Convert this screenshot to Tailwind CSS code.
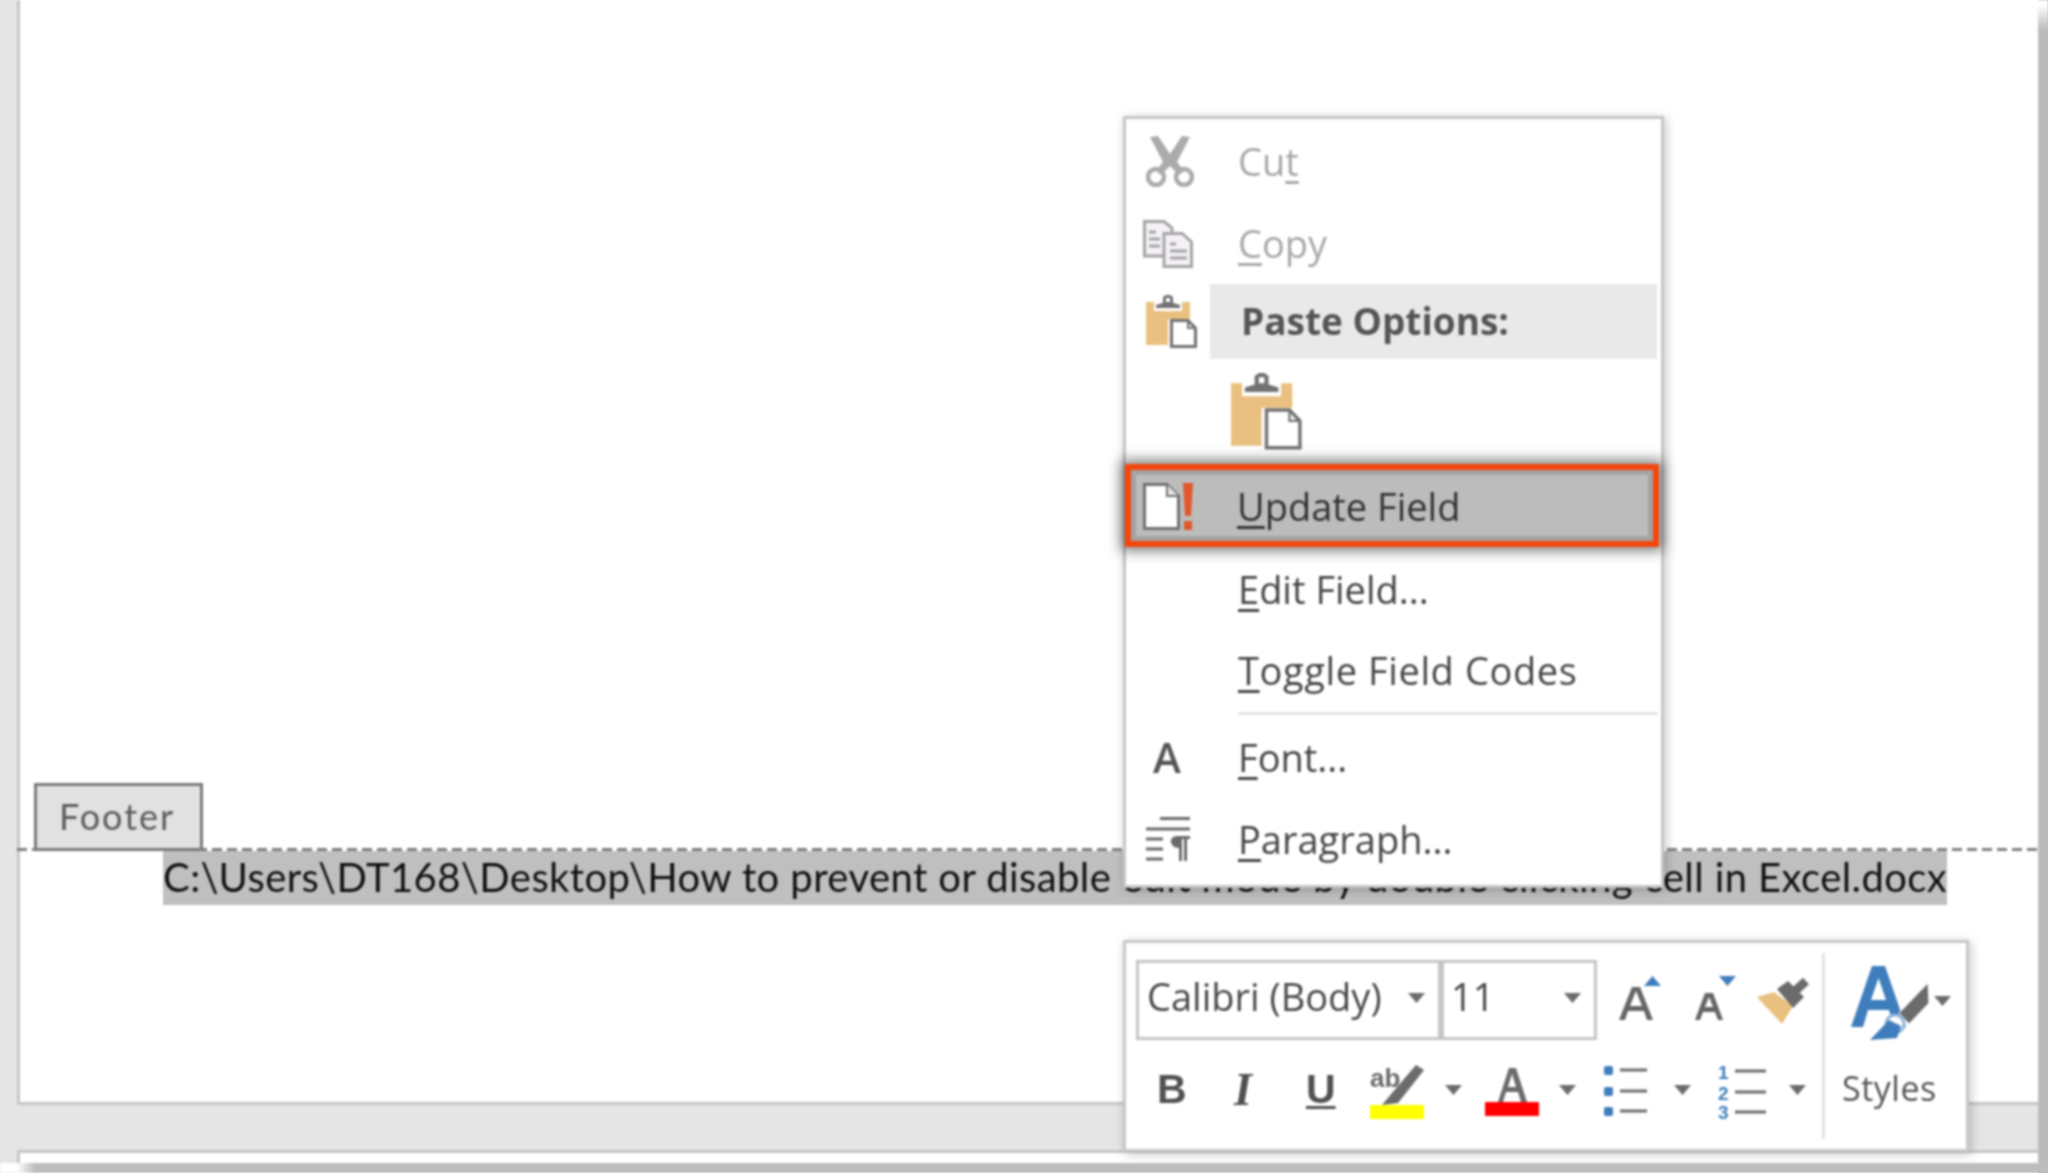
<!DOCTYPE html>
<html>
<head>
<meta charset="utf-8">
<script src="https://cdn.jsdelivr.net/npm/@tailwindcss/browser@4"></script>
</head>
<body class="overflow-hidden bg-[linear-gradient(to_right,#e5e5e5_17px,#fff_17px,#fff_2038px,#bbb_2038px)]">
<div class="relative w-[2048px] h-[1173px] overflow-hidden blur-[0.8px] font-['Open_Sans',sans-serif]">

  <!-- document area -->
  <div class="flex h-[1163px]">
    <div class="flex-1 flex flex-col bg-[#e5e5e5] pl-[17px]">
      <div class="h-[1105px] bg-white border-l-[3px] border-b-[3px] border-[#c6c6c6] pt-[783px] pl-[14px]">
        <div class="relative z-10 w-[169px] h-[68px] bg-[#e1e1e1] border-[3px] border-[#7a7a7a] flex items-center justify-center pb-[3px] pr-[3px] text-[#5c5c5c] text-[36px] tracking-[2px] font-['Lato',sans-serif]">Footer</div>
        <div class="-mt-[3px] -ml-[17px] h-[3px] bg-[repeating-linear-gradient(90deg,#808080_0_10px,transparent_10px_15px)]"></div>
        <div class="ml-[129px] w-max h-[54px] bg-[#bfbfbf] text-[#111] text-[40px] leading-[52px] tracking-[0.41px] font-['Lato',sans-serif] whitespace-nowrap">C:\Users\DT168\Desktop\How to prevent or disable edit mode by double clicking cell in Excel.docx</div>
      </div>
      <div class="h-[45px]"></div>
      <div class="flex-1 bg-white border-l-[3px] border-t-[3px] border-[#c6c6c6]"></div>
    </div>
    <div class="w-[10px] bg-[linear-gradient(to_bottom,#fff_5px,#bbb_30px)]"></div>
  </div>
  <div class="h-[10px] bg-[linear-gradient(to_right,#fff_17px,#bdbdbd_35px)]"></div>

  <!-- context menu -->
  <div class="absolute z-20 left-[1123px] top-[116px] w-[541px] h-[772px] bg-white border-[3px] border-[#c6c6c6] shadow-[2px_2px_10px_rgba(0,0,0,0.22)] text-[#464646] text-[38px]">
    <div class="flex items-center h-[84px] text-[#a8a8a8]">
      <div class="w-[112px] pl-[20px]">
        <svg width="48" height="51" viewBox="0 0 48 51"><path d="M4 1 L12 0 L24 18 L36 0 L44 1 L31 26 L38 35 L33 39 L24 30 L15 39 L10 35 L17 26 Z" fill="#ababab"/><circle cx="10" cy="41" r="8" fill="none" stroke="#ababab" stroke-width="4.500"/><circle cx="38" cy="41" r="8" fill="none" stroke="#ababab" stroke-width="4.500"/></svg>
      </div>
      <span>Cu<u class="decoration-[3px] underline-offset-[5px]">t</u></span>
    </div>
    <div class="flex items-center h-[81px] text-[#a8a8a8]">
      <div class="w-[112px] pl-[17px]">
        <svg width="50" height="48" viewBox="0 0 50 48"><path d="M1.500 1.500 H21 L29 8 V36 H1.500 Z" fill="#f5f1f7" stroke="#a5a5a5" stroke-width="3"/><path d="M6 12 H13 M6 19 H17 M6 26 H17" stroke="#a5a5a5" stroke-width="3"/><path d="M21 13.500 H39 L48.500 22 V46.500 H21 Z" fill="#f5f1f7" stroke="#a5a5a5" stroke-width="3"/><path d="M27 24 H33 M27 31 H44 M27 38 H44" stroke="#a5a5a5" stroke-width="3"/></svg>
      </div>
      <span><u class="decoration-[3px] underline-offset-[5px]">C</u>opy</span>
    </div>
    <div class="flex items-center h-[75px]">
      <div class="w-[84px] pl-[20px]">
        <svg width="51" height="53" viewBox="0 0 51 53"><path d="M0 7 H8 V16 H36 V7 H44 V24 H22 V50 H0 Z" fill="#e9c07f"/><path d="M10 13 V10 L17 8 V2 L20 0 H24 L27 2 V8 L34 10 V13 Z M20 3 V7 H24 V3 Z" fill="#717171" fill-rule="evenodd"/><path d="M25.500 25.500 H42 L49.500 33 V51.500 H25.500 Z" fill="#fff" stroke="#717171" stroke-width="3"/><path d="M42 25.500 V33 H49.500" fill="none" stroke="#717171" stroke-width="2"/></svg>
      </div>
      <div class="w-[447px] h-[75px] bg-[#e9e9e9] flex items-center pl-[31px] pb-[2px] font-bold text-[37px] text-[#555]">Paste Options:</div>
    </div>
    <div class="h-[93px] pl-[105px] pt-[14px]">
      <svg width="71" height="77" viewBox="0 0 51 53" preserveAspectRatio="none"><path d="M0 7 H8 V16 H36 V7 H44 V24 H22 V50 H0 Z" fill="#e9c07f"/><path d="M10 13 V10 L17 8 V2 L20 0 H24 L27 2 V8 L34 10 V13 Z M20 3 V7 H24 V3 Z" fill="#717171" fill-rule="evenodd"/><path d="M25.500 25.500 H42 L49.500 33 V51.500 H25.500 Z" fill="#fff" stroke="#717171" stroke-width="2.400"/><path d="M42 25.500 V33 H49.500" fill="none" stroke="#717171" stroke-width="1.600"/></svg>
    </div>
    <div class="mt-[12px] h-[83px] ml-[-1px] w-[534px] flex items-center bg-[#bcbcbc] border-[6px] border-[#f4470e] shadow-[0_0_12px_4px_rgba(0,0,0,0.5),inset_0_0_0_5px_#a3a3a3] text-[#333] relative">
      <div class="w-[106px] pl-[12px] flex items-center gap-[3px] pt-[2px]">
        <svg width="37" height="47" viewBox="0 0 37 47"><path d="M1.500 1.500 H24 L35.500 13 V45.500 H1.500 Z" fill="#fff" stroke="#717171" stroke-width="3"/><path d="M24 1.500 V13 H35.500" fill="#e4e4e4" stroke="#717171" stroke-width="2"/></svg>
        <svg width="10" height="47" viewBox="0 0 10 47"><path d="M0 0 H10 L8 33 H2 Z M1 38 H9 V47 H1 Z" fill="#e2572b"/></svg>
      </div>
      <span class="pt-[2px]"><u class="decoration-[3px] underline-offset-[5px]">U</u>pdate Field</span>
    </div>
    <div class="flex items-center h-[82px] mt-[1px] pl-[112px]">
      <span><u class="decoration-[3px] underline-offset-[5px]">E</u>dit Field...</span>
    </div>
    <div class="flex items-center h-[81px] pl-[112px] tracking-[0.6px]">
      <span><u class="decoration-[3px] underline-offset-[5px]">T</u>oggle Field Codes</span>
    </div>
    <div class="ml-[112px] mr-[3px] mt-[1px] h-[3px] bg-[#e3e3e3]"></div>
    <div class="flex items-center h-[84px]">
      <div class="w-[112px] pl-[27px] text-[42px] font-semibold text-[#555] leading-none">A</div>
      <span><u class="decoration-[3px] underline-offset-[5px]">F</u>ont...</span>
    </div>
    <div class="flex items-center h-[80px]">
      <div class="w-[112px] pl-[20px]">
        <svg width="44" height="44" viewBox="0 0 44 44"><path d="M14 1.500 H44 M0 12 H44 M0 22 H17 M0 32 H17 M0 42 H17" stroke="#6a6a6a" stroke-width="3"/><path d="M32 19 H44 V22 H41 V44 H38 V22 H36 V44 H33 V31 C24 31 21 19 32 19 Z" fill="#6a6a6a"/></svg>
      </div>
      <span><u class="decoration-[3px] underline-offset-[5px]">P</u>aragraph...</span>
    </div>
  </div>

  <!-- mini toolbar -->
  <div class="absolute z-20 left-[1123px] top-[940px] w-[846px] h-[212px] bg-white border-[3px] border-[#c8c8c8] shadow-[2px_2px_10px_rgba(0,0,0,0.22)] flex text-[#484848]">
    <div class="w-[696px] pl-[10px] pt-[17px]">
      <div class="flex items-center">
        <div class="w-[461px] h-[80px] border-[3px] border-[#c6c6c6] flex text-[38px]">
          <div class="w-[305px] border-r-[6px] border-[#c6c6c6] flex items-center pl-[8px] pb-[8px]">
            <span>Calibri (Body)</span>
          </div>
          <div class="flex-1 flex items-center pl-[7px] pb-[8px]"><span>11</span></div>
        </div>
      </div>
      <div class="flex items-center h-[60px] mt-[22px] pl-[21px]">
        <span class="w-[77px] pb-[5px] font-['Liberation_Sans',sans-serif] font-bold text-[41px] leading-none text-[#505050]">B</span>
        <span class="w-[72px] pb-[5px] font-['Liberation_Serif',serif] font-bold italic text-[46px] leading-none text-[#505050]">I</span>
        <span class="w-[64px] pb-[5px] font-['Liberation_Sans',sans-serif] font-bold text-[41px] leading-none text-[#505050] underline decoration-[3px] underline-offset-[3px]">U</span>
        <svg width="54" height="54" viewBox="0 0 54 54"><text x="0" y="22" font-family="Liberation Sans" font-weight="700" font-size="26" fill="#6b6b6b">ab</text><path d="M54 5 L46 0 L22 28 L12 40 L28 38 Z" fill="#6b6b6b"/><rect y="40" width="54" height="14" fill="#ffff00"/></svg>
        <svg class="ml-[21px] -mt-[5px]" width="17" height="10" viewBox="0 0 17 10"><path d="M0 0 H17 L8.500 10 Z" fill="#6b6b6b"/></svg>
        <svg class="ml-[23px]" width="54" height="48" viewBox="0 0 54 48"><path d="M13 34 L24 0 H31 L42 34 H36 L33 24 H21 L18 34 Z M23 19 H31 L27 6 Z" fill="#6b6b6b" fill-rule="evenodd"/><rect y="34" width="54" height="14" fill="#ff0000"/></svg>
        <svg class="ml-[20px] -mt-[5px]" width="17" height="10" viewBox="0 0 17 10"><path d="M0 0 H17 L8.500 10 Z" fill="#6b6b6b"/></svg>
        <svg class="ml-[27px] -mt-[2px]" width="44" height="52" viewBox="0 0 44 52"><g fill="#3f7ebd"><rect x="1" y="1" width="9" height="9" rx="2"/><rect x="1" y="22" width="9" height="9" rx="2"/><rect x="1" y="42" width="9" height="9" rx="2"/></g><path d="M17 5 H44 M17 26 H44 M17 46 H44" stroke="#6b6b6b" stroke-width="3"/></svg>
        <svg class="ml-[27px] -mt-[5px]" width="17" height="10" viewBox="0 0 17 10"><path d="M0 0 H17 L8.500 10 Z" fill="#6b6b6b"/></svg>
        <svg class="ml-[27px]" width="48" height="56" viewBox="0 0 48 56"><g fill="#3f7ebd" font-family="Liberation Sans" font-weight="700" font-size="19"><text x="0" y="15">1</text><text x="0" y="36">2</text><text x="0" y="55">3</text></g><path d="M17 7 H48 M17 28 H48 M17 48 H48" stroke="#6b6b6b" stroke-width="3"/></svg>
        <svg class="ml-[23px] -mt-[5px]" width="17" height="10" viewBox="0 0 17 10"><path d="M0 0 H17 L8.500 10 Z" fill="#6b6b6b"/></svg>
      </div>
    </div>
    <div class="w-[3px] h-[186px] mt-[10px] bg-[#e3e3e3]"></div>
    <div class="flex-1 pl-[26px] pt-[23px]">
      <div class="flex">
        <svg width="80" height="75" viewBox="0 0 80 75"><path d="M0 61 L21 0 H34 L55 61 H43 L38 44 H17 L12 61 Z M20 34 H35 L27.500 12 Z" fill="#3f7ebd" fill-rule="evenodd"/><path d="M77 17 L78 37 L58 58 L48 47 Z" fill="#6b6b6b" stroke="#fff" stroke-width="1"/><circle cx="44" cy="58" r="9" fill="#fff" stroke="#8fb4da" stroke-width="3"/><path d="M19 74 L38 54 L50 60 L46 72 Z" fill="#3f7ebd"/></svg>
        <svg class="mt-[30px] ml-[3px]" width="17" height="10" viewBox="0 0 17 10"><path d="M0 0 H17 L8.500 10 Z" fill="#6b6b6b"/></svg>
      </div>
    </div>
  </div>

  <!-- toolbar pieces that sit over the combo row -->
  <div class="absolute z-30 left-[1408px] top-[993px]"><svg class="block" width="17" height="10" viewBox="0 0 17 10"><path d="M0 0 H17 L8.500 10 Z" fill="#6b6b6b"/></svg></div>
  <div class="absolute z-30 left-[1564px] top-[993px]"><svg class="block" width="17" height="10" viewBox="0 0 17 10"><path d="M0 0 H17 L8.500 10 Z" fill="#6b6b6b"/></svg></div>
  <div class="absolute z-30 left-[1619px] top-[976px]"><svg class="block" width="44" height="45" viewBox="0 0 44 45"><path d="M25 10 L33.500 0 L42 10 Z" fill="#3f7ebd"/><path d="M0 44 L13 11 H21 L34 44 H28 L25 35 H9 L6 44 Z M11 30 H23 L17 15 Z" fill="#666" fill-rule="evenodd"/></svg></div>
  <div class="absolute z-30 left-[1695px] top-[976px]"><svg class="block" width="41" height="45" viewBox="0 0 41 45"><path d="M24 0 H41 L32.500 10 Z" fill="#3f7ebd"/><path d="M0 44 L10 17 H18 L28 44 H23 L20 36 H8 L5 44 Z M10 31 H18 L14 21 Z" fill="#666" fill-rule="evenodd"/></svg></div>
  <div class="absolute z-30 left-[1757px] top-[976px]"><svg class="block" width="54" height="48" viewBox="0 0 54 48"><path d="M0 21 L17 16 L36 30 L25 48 Z" fill="#e9c07f"/><path d="M20 13 L31 5 L47 21 L36 32 Z" fill="#6b6b6b"/><path d="M38 15 L49 5" stroke="#6b6b6b" stroke-width="9"/></svg></div>
  <div class="absolute z-30 left-[1842px] top-[1066px] text-[#555] text-[34px] leading-[44px] tracking-[0.5px]">Styles</div>
</div>
</body>
</html>
